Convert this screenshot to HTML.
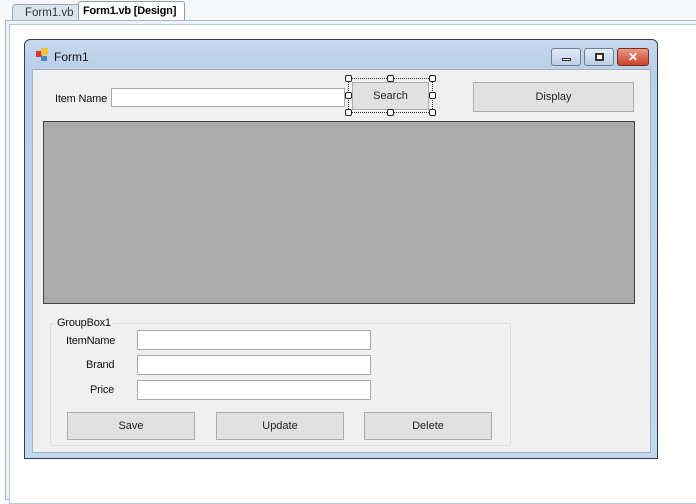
<!DOCTYPE html>
<html><head><style>
*{margin:0;padding:0;box-sizing:border-box}
body{width:696px;height:492px;background:#fff;font-family:"Liberation Sans",sans-serif;font-size:12px;position:relative;overflow:hidden;color:#000}
.a{position:absolute;white-space:nowrap}
.tb{background:#fff;border:1px solid #a9a9a9}
.btn{background:#e1e1e1;border:1px solid #adadad;text-align:center;font-size:11px;color:#222}
.lbl{font-size:11px;color:#111;letter-spacing:-0.2px}
.h{position:absolute;width:7px;height:7px;border:1px solid #222;background:#fff;border-radius:2px}
</style></head><body>
<div class="a" style="left:0;top:0;width:696px;height:21px;background:#f4f6fa"></div>
<div class="a" style="left:12px;top:4px;width:70px;height:17px;background:#dde4ee;border:1px solid #9aa8bb;border-bottom:none;border-radius:4px 4px 0 0;font-size:11.5px;padding:2px 0 0 12px;color:#333;overflow:hidden">Form1.vb</div>
<div class="a" style="left:78px;top:1px;width:107px;height:20px;background:#fff;border:1px solid #8a9bb5;border-bottom:none;border-radius:3px 3px 0 0;font-size:11px;font-weight:bold;padding:3px 0 0 4px;letter-spacing:-0.2px">Form1.vb [Design]</div>
<div class="a" style="left:5px;top:20px;width:700px;height:480px;border:1px solid #a5b6cc;border-right:none;background:#eef3f9"></div>
<div class="a" style="left:9px;top:24px;width:700px;height:480px;border:1px solid #b8c8da;border-right:none;background:#fff"></div>
<div class="a" style="left:24px;top:39px;width:634px;height:420px;border:1px solid #333c48;border-radius:6px 6px 0 0;background:linear-gradient(#c5d8ee,#b9cfe8 30px,#c2d6ee)"></div>
<div class="a" style="left:36px;top:51px;width:6px;height:6px;background:#d33"></div>
<div class="a" style="left:41px;top:48px;width:7px;height:7px;background:#f2c230"></div>
<div class="a" style="left:41px;top:56px;width:6px;height:5px;background:#48c"></div>
<div class="a" style="left:54px;top:50px;font-size:12px;color:#111">Form1</div>
<div class="a" style="left:551px;top:48px;width:30px;height:18px;border:1px solid #6c7e96;border-radius:3px;background:linear-gradient(#e3ecf6,#bccde3)"><div class="a" style="left:10px;top:9px;width:9px;height:3px;border:1px solid #333;background:#fff"></div></div>
<div class="a" style="left:584px;top:48px;width:30px;height:18px;border:1px solid #6c7e96;border-radius:3px;background:linear-gradient(#e3ecf6,#bccde3)"><div class="a" style="left:10px;top:4px;width:9px;height:8px;border:2px solid #333;background:#fff"></div></div>
<div class="a" style="left:617px;top:48px;width:32px;height:18px;border:1px solid #7a2a20;border-radius:3px;background:linear-gradient(#e99a88,#c9412b);color:#fff;font-weight:bold;font-size:12px;text-align:center;line-height:16px">✕</div>
<div class="a" style="left:32px;top:69px;width:619px;height:384px;background:#f0f0f0;border:1px solid #9fb2c8"></div>
<div class="a lbl" style="left:55px;top:93px">Item Name</div>
<div class="a tb" style="left:111px;top:88px;width:234px;height:19px"></div>
<div class="a btn" style="left:352px;top:82px;width:77px;height:28px;line-height:26px">Search</div>
<div class="a" style="left:348px;top:78px;width:85px;height:35px;border:1px dotted #333"></div>
<div class="h" style="left:345px;top:75px"></div><div class="h" style="left:387px;top:75px"></div><div class="h" style="left:429px;top:75px"></div>
<div class="h" style="left:345px;top:92px"></div><div class="h" style="left:429px;top:92px"></div>
<div class="h" style="left:345px;top:109px"></div><div class="h" style="left:387px;top:109px"></div><div class="h" style="left:429px;top:109px"></div>
<div class="a btn" style="left:473px;top:82px;width:161px;height:30px;line-height:28px">Display</div>
<div class="a" style="left:43px;top:121px;width:592px;height:183px;background:#ababab;border:1px solid #444"></div>
<div class="a" style="left:50px;top:323px;width:461px;height:123px;border:1px solid #dcdcdc;border-radius:2px"></div>
<div class="a lbl" style="left:55px;top:317px;background:#f0f0f0;padding:0 2px">GroupBox1</div>
<div class="a lbl" style="left:66px;top:335px">ItemName</div>
<div class="a lbl" style="left:86px;top:359px">Brand</div>
<div class="a lbl" style="left:90px;top:384px">Price</div>
<div class="a tb" style="left:137px;top:330px;width:234px;height:20px"></div>
<div class="a tb" style="left:137px;top:355px;width:234px;height:20px"></div>
<div class="a tb" style="left:137px;top:380px;width:234px;height:20px"></div>
<div class="a btn" style="left:67px;top:412px;width:128px;height:28px;line-height:26px">Save</div>
<div class="a btn" style="left:216px;top:412px;width:128px;height:28px;line-height:26px">Update</div>
<div class="a btn" style="left:364px;top:412px;width:128px;height:28px;line-height:26px">Delete</div>
</body></html>
